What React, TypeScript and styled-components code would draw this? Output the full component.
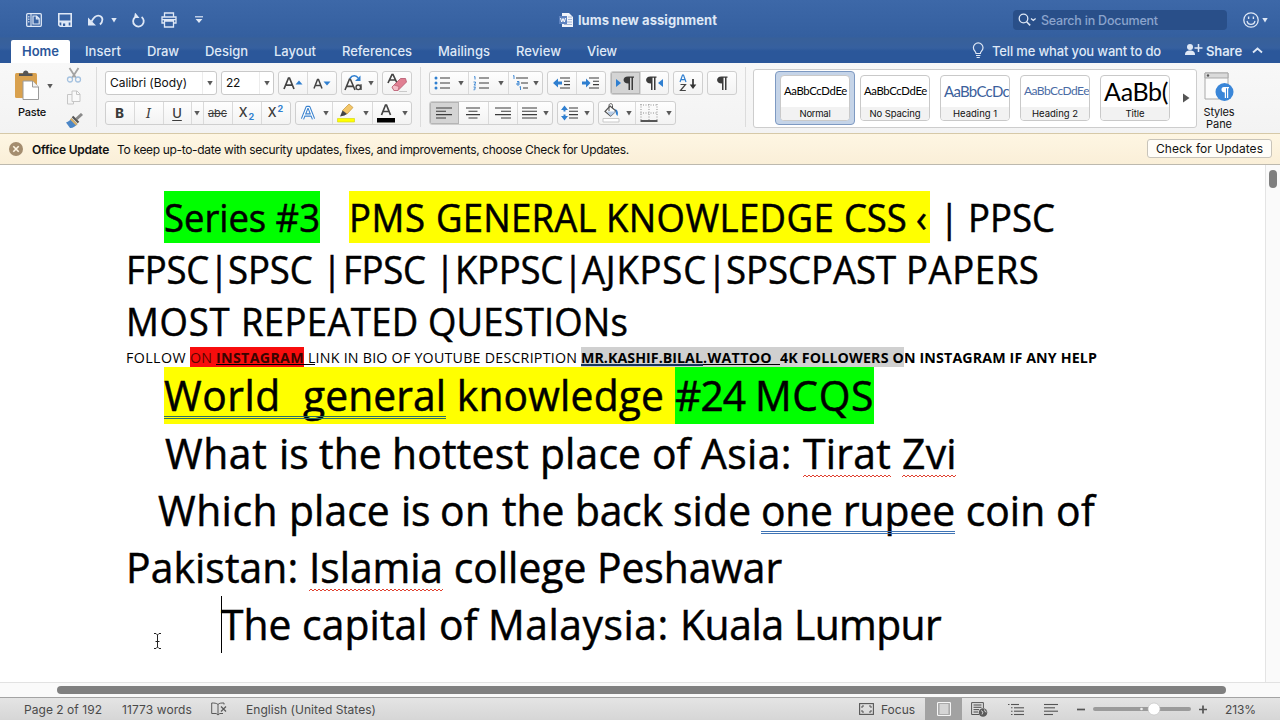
import React from 'react';
import styled, { createGlobalStyle, css } from 'styled-components';

const ui = '"Inter", "Liberation Sans", sans-serif';
const body = '"Open Sans", "Noto Sans", sans-serif';

const Global = createGlobalStyle`
  * { box-sizing: border-box; }
  body { margin: 0; overflow: hidden; background: #fff; }
  svg { display: block; flex: none; }
`;

const Window = styled.div`
  width: 1280px; height: 720px; display: flex; flex-direction: column;
  font-family: ${ui}; font-size: 12px; color: #111; overflow: hidden;
`;

const Label = styled.span<{ $w: number; $ls?: number; $size?: number; $weight?: number; $color?: string }>`
  display: block; flex: none; width: ${p => p.$w}px; white-space: pre;
  letter-spacing: ${p => p.$ls ?? 0}px;
  font-size: ${p => p.$size ?? 12}px; font-weight: ${p => p.$weight ?? 400};
  color: ${p => p.$color ?? 'inherit'};
`;
type TextProps = { w: number; ls?: number; size?: number; weight?: number; color?: string; children: React.ReactNode };
const T = ({ w, ls, size, weight, color, children }: TextProps) => (
  <Label $w={w} $ls={ls} $size={size} $weight={weight} $color={color}>{children}</Label>
);

const Gap = styled.div<{ $w: number }>`flex: none; width: ${p => p.$w}px;`;

/* title bar */
const Top = styled.header`
  height: 63px; flex: none; color: #dfe8f6;
  background: linear-gradient(#3d68a8 0, #345f9f 37px, #386099 38px, #36609f 48px, #2b579a 51px, #2b579a 100%);
`;
const TitleBar = styled.div`height: 40px; display: flex; align-items: center;`;
const SearchBox = styled.div`
  width: 214px; height: 20px; border-radius: 4px; background: #294f89; display: flex; align-items: center; padding-left: 5px;
`;
const TabRow = styled.nav`height: 23px; display: flex; align-items: center; padding-bottom: 2px;`;
const Tab = styled.div<{ $active?: boolean }>`
  height: 23px; display: flex; align-items: center; padding: 0 13px; flex: none;
  ${p => p.$active && css`background: #fff; color: #2b579a; padding: 0 11px; margin: 2px 2px 0 11px; padding-bottom: 1px; border-radius: 2px 2px 0 0;`}
`;

/* ribbon */
const Ribbon = styled.section`
  height: 71px; flex: none; display: flex; background: linear-gradient(#f8f8f8, #f3f3f3);
  border-bottom: 1px solid #d6c9a8;
`;
const Separator = styled.div`width: 1px; height: 60px; margin-top: 4px; background: #dcdcdc; flex: none;`;
const Rows = styled.div<{ $w: number }>`
  width: ${p => p.$w}px; padding: 8px 0 0 8px; display: flex; flex-direction: column; gap: 6px; flex: none;
`;
const Row = styled.div`display: flex; gap: 4px; height: 24px;`;
const Group = styled.div<{ $w: number }>`
  width: ${p => p.$w}px; height: 24px; flex: none; display: flex; border: 1px solid #cfcfcf; border-radius: 3px;
  background: linear-gradient(#fefefe, #f3f3f3); overflow: hidden;
`;
const Cell = styled.div<{ $w: number; $on?: boolean; $line?: boolean }>`
  width: ${p => p.$w}px; flex: none; display: flex; align-items: center; justify-content: center; padding-right: 1px;
  border-left: ${p => (p.$line ? '1px solid #dadada' : '0')};
  ${p => p.$on && css`background: #d4d4d4; box-shadow: inset 0 0 0 1px #b5b5b5;`}
`;
const Combo = styled.div<{ $w: number }>`
  width: ${p => p.$w}px; height: 24px; flex: none; display: flex; align-items: center; padding: 0 0 1px 4px;
  border: 1px solid #c9c9c9; border-radius: 3px; background: #fff;
`;
const ComboArrow = styled.div`
  margin-left: auto; width: 14px; height: 22px; border-left: 1px solid #ececec; display: flex; align-items: center; justify-content: center;
`;
const Glyph = styled.span<{ $size: number; $weight?: number; $italic?: boolean; $strike?: boolean; $under?: boolean; $serif?: boolean }>`
  font-size: ${p => p.$size}px; font-weight: ${p => p.$weight ?? 400}; color: #3b3b3b; line-height: 1;
  font-style: ${p => (p.$italic ? 'italic' : 'normal')};
  font-family: ${p => (p.$serif ? '"DejaVu Serif", serif' : ui)};
  text-decoration: ${p => (p.$strike ? 'line-through' : p.$under ? 'underline' : 'none')};
  text-underline-offset: 2px;
  sub, sup { font-size: 9px; font-weight: 700; color: #2f7fd0; line-height: 0; margin-left: 1px; }
  sub { vertical-align: -3px; }
`;
const Clip = styled.div`width: 96px; display: flex; padding: 6px 0 0 14px; flex: none;`;
const PasteCol = styled.div`width: 30px; display: flex; flex-direction: column; gap: 5px;`;
const PasteLabel = styled.div`padding-left: 4px; height: 14px;`;
const ArrowCol = styled.div`width: 16px; padding: 14px 0 0 3px;`;
const MiniCol = styled.div`display: flex; flex-direction: column; gap: 7px; margin: -2px 0 0 6px;`;

const Gallery = styled.div`
  width: 444px; height: 59px; margin: 6px 0 0 7px; border: 1px solid #cdcdcd; border-radius: 3px; background: #fff;
  display: flex; padding: 1px 0 0 21px; flex: none;
`;
const StyleSlot = styled.div<{ $on?: boolean }>`
  width: 80px; height: 54px; padding: 3px 4px; flex: none; border-radius: 4px; border: 1px solid transparent;
  ${p => p.$on && css`background: #c5d4e8; border-color: #7d99c2;`}
`;
const StyleCard = styled.div`
  width: 70px; height: 46px; border: 1px solid #c9c9c9; border-radius: 4px; background: #fff; overflow: hidden;
  display: flex; flex-direction: column;
`;
const Sample = styled.div`
  height: 31px; flex: none; display: flex; align-items: center; padding: 0 0 2px 3px; overflow: hidden;
  font-family: "Lato", sans-serif;
`;
const StyleName = styled.div`
  flex: 1; background: #f2f2f2; display: flex; align-items: center; justify-content: center; line-height: 12px;
`;
const GalleryArrow = styled.div`padding: 22px 0 0 8px;`;
const PaneButton = styled.div`
  margin: 9px 0 0 5px; width: 34px; display: flex; flex-direction: column; align-items: center; line-height: 12px;
  svg { margin-bottom: 4px; }
`;

/* update notice */
const Notice = styled.section`
  height: 31px; flex: none; display: flex; align-items: center; padding: 0 8px 0 9px;
  background: linear-gradient(#fef6e3, #faefd8); border-bottom: 1px solid #bdb9ae;
`;
const NoticeButton = styled.div`
  margin-left: auto; width: 125px; height: 19px; margin-bottom: 2px; border: 1px solid #c8c4ba; border-radius: 3px; background: #fffdf8;
  display: flex; align-items: center; justify-content: center;
`;

/* document */
const Work = styled.main`height: 518px; flex: none; display: flex; background: #fff; border-bottom: 1px solid #e2e2e2;`;
const Page = styled.article`width: 1265px; padding-top: 26px; font-family: ${body}; color: #000; position: relative;`;
const VBar = styled.div`width: 15px; border-left: 1px solid #e4e4e4; background: #fafafa; padding: 5px 0 0 3px;`;
const VThumb = styled.div`width: 8px; height: 18px; border-radius: 4px; background: #7f7f7f;`;
const HBar = styled.div`height: 14px; flex: none; background: #fafafa; padding: 3px 0 0 57px;`;
const HThumb = styled.div`width: 1169px; height: 8px; border-radius: 4px; background: #808080;`;

const RunText = styled.span<{ $ls?: number; $bold?: boolean; $color?: string }>`
  display: inline-block; white-space: pre; transform-origin: 0 0;
  letter-spacing: ${p => p.$ls ?? 0}px; font-weight: ${p => (p.$bold ? 700 : 400)}; color: ${p => p.$color ?? '#000'};
`;
const Line = styled.div<{ $x: number }>`
  padding-left: ${p => p.$x}px; display: flex;
`;
const HeadLine = styled(Line)`
  height: 52px; font-size: 38px; line-height: 52.4px;
  ${RunText} { transform: scaleX(0.96); -webkit-text-stroke: 0.5px; }
`;
const NoteLine = styled(Line)`
  height: 20px; font-size: 14.5px; line-height: 21.4px;
  ${RunText} { transform: scaleX(0.98); }
`;
const BigLine = styled(Line)<{ $after?: number }>`
  height: 57px; margin-bottom: ${p => p.$after ?? 0}px; font-size: 41.6px; line-height: 56px;
  ${RunText} { transform: scaleX(0.98); -webkit-text-stroke: 0.5px; }
`;
const RunBox = styled.span<{ $w: number; $bg?: string }>`
  position: relative; flex: none; display: block; width: ${p => p.$w}px; height: 100%; background: ${p => p.$bg ?? 'transparent'};
`;
const DoubleRule = styled.i<{ $color: string }>`
  position: absolute; left: 0; right: 0; top: 49px; height: 3px;
  border-top: 1px solid ${p => p.$color}; border-bottom: 1px solid ${p => p.$color};
`;
const Rule = styled.i<{ $w: number; $color: string; $h: number }>`
  position: absolute; z-index: 1; left: 0; top: 17px; width: ${p => p.$w}px; height: ${p => p.$h}px; background: ${p => p.$color};
`;
const WaveSvg = styled.svg`position: absolute; left: 0; top: 49px;`;
const Wave = ({ w }: { w: number }) => (
  <WaveSvg width={w} height="4">
    <path fill="none" stroke="#e0402f" strokeWidth="1"
      d={'M0 3' + Array.from({ length: Math.floor(w / 2) }, (_, i) => `L${i * 2 + 2} ${i % 2 ? 3 : 1}`).join('')} />
  </WaveSvg>
);
type RunProps = { w: number; ls?: number; bg?: string; bold?: boolean; color?: string; t: string; children?: React.ReactNode };
const Run = ({ w, ls, bg, bold, color, t, children }: RunProps) => (
  <RunBox $w={w} $bg={bg}><RunText $ls={ls} $bold={bold} $color={color}>{t}</RunText>{children}</RunBox>
);
const Caret = styled.i`position: absolute; left: 0; top: 0; width: 1px; height: 57px; background: #000;`;
const Pointer = styled.svg`position: absolute; left: 152px; top: 467px;`;

/* status bar */
const Status = styled.footer`
  height: 23px; flex: none; display: flex; align-items: center; border-top: 1px solid #a3a3a3;
  background: linear-gradient(#e4e4e4, #d6d6d6); color: #4a4a4a;
`;
const ViewOn = styled.div`width: 37px; height: 22px; background: #a2a2a2; display: flex; align-items: center; justify-content: center;`;

const Down = ({ c = '#5a5a5a', s = 6 }: { c?: string; s?: number }) => (
  <svg width={s} height={s} viewBox="0 0 6 6"><path d="M0.3 1h5.4L3 5.4z" fill={c} /></svg>
);
const Svg = ({ w = 16, h = 16, children }: { w?: number; h?: number; children: React.ReactNode }) => (
  <svg width={w} height={h} viewBox={`0 0 ${w} ${h}`} fill="none" strokeLinecap="butt">{children}</svg>
);
const lines = (pts: number[][], c = '#3b3b3b') => pts.map(([x1, x2, y], i) => <path key={i} d={`M${x1} ${y}H${x2}`} stroke={c} strokeWidth="1.1" />);

const tabs: [string, number, number][] = [
  ['Insert', 36, 0.05], ['Draw', 32, -0.13], ['Design', 43, -0.03], ['Layout', 42, 0.02], ['References', 70, -0.05],
  ['Mailings', 52, 0.01], ['Review', 45, 0.07], ['View', 30, -0.18],
];
const styleCards = [
  { name: 'Normal', nw: 31, nls: -0.26, text: 'AaBbCcDdEe', w: 63, ls: -0.34, size: 11.3, color: '#000' },
  { name: 'No Spacing', nw: 51, nls: -0.1, text: 'AaBbCcDdEe', w: 63, ls: -0.34, size: 11.3, color: '#000' },
  { name: 'Heading 1', nw: 44, nls: 0, text: 'AaBbCcDc', w: 65, ls: -0.72, size: 15, color: '#3c5f9c' },
  { name: 'Heading 2', nw: 46, nls: 0, text: 'AaBbCcDdEe', w: 65, ls: -0.55, size: 12, color: '#4a6ba5' },
  { name: 'Title', nw: 19, nls: -0.08, text: 'AaBb(', w: 64, ls: -0.3, size: 25, color: '#000' },
];

const GREEN = '#00ff00', YELLOW = '#ffff00', RED = '#f80d0d', GRAY = '#d0d0d0';
const TEAL = '#2a6f6a', BLUE = '#3f74b5';

export default function App() {
  const ic = '#dfe8f6';
  return (
    <Window>
      <Global />
      <Top>
        <TitleBar>
          <Gap $w={26} />
          <Svg w={16} h={14}><rect x=".7" y=".7" width="14.6" height="12.6" rx="1" stroke={ic} strokeWidth="1.3" /><path d="M2.8 3v1.4M2.8 5.500v1.4M2.8 8v1.4M5 1v12" stroke={ic} strokeWidth="1.1" /><path d="M7 3h3.600l2.600 2.600V11H7zM10.400 3v2.800h2.800" stroke={ic} strokeWidth="1.2" /></Svg>
          <Gap $w={16} />
          <Svg w={14} h={14}><path d="M.8.8h12.4v12.4H2.200L.8 12z" stroke={ic} strokeWidth="1.6" /><path d="M1 7.500h12v2H1z" fill={ic} /><path d="M3.300 8h7.400v5.500H3.300z" fill={ic} /><path d="M5 10.500h2.200V13H5z" fill="#35609f" /></Svg>
          <Gap $w={16} />
          <Svg w={16} h={14}><path d="M0 4.500v8h8z" fill={ic} /><path d="M3.500 8.500C6 4 9 1.800 12 3c3.400 1.500 3 5.500 0 8.500" stroke={ic} strokeWidth="1.8" /></Svg>
          <Gap $w={7} /><Down c={ic} />
          <Gap $w={14} />
          <Svg w={15} h={15}><path d="M4 4.200A5.300 5.300 0 1 0 10.600 4" stroke={ic} strokeWidth="1.8" /><path d="M7 0v5.500L12.500 1z" fill={ic} transform="rotate(-90 8 3) translate(-1 -2)" /></Svg>
          <Gap $w={15} />
          <Svg w={16} h={16}><path d="M3.500 5V1h9v4M3.500 11H1V5h14v6h-2.500M3.500 9h9v6h-9zM1 7.600h14" stroke={ic} strokeWidth="1.3" /></Svg>
          <Gap $w={18} />
          <Svg w={8} h={8}><path d="M0 .8h8" stroke={ic} strokeWidth="1.2" /><path d="M.6 3h6.800L4 7z" fill={ic} /></Svg>
          <Gap $w={356} />
          <Svg w={14} h={14}><path d="M3 0h7l4 4v10H3z" fill="#f1f4fa" /><path d="M9 4h4M9 6.500h4M5 9h8M5 11.500h8" stroke="#8fa6cb" strokeWidth=".8" /><path d="M0 3h8v8H0z" fill="#5d82bf" /><path d="M1.500 5l1.200 4L4 5.500 5.300 9l1.200-4" stroke="#fff" strokeWidth="1" /></Svg>
          <Gap $w={5} />
          <T w={139} size={13} weight={700} ls={0.05}>lums new assignment</T>
          <Gap $w={296} />
          <SearchBox>
            <Svg w={20} h={14}><circle cx="5.500" cy="5.500" r="4.300" stroke={ic} strokeWidth="1.3" /><path d="M8.600 8.800l3.600 3.600" stroke={ic} strokeWidth="1.5" /><path d="M13 5.500l2.300 2 2.300-2" stroke={ic} strokeWidth="1.3" /></Svg>
            <Gap $w={3} /><T w={116} size={12.5} ls={-0.22} weight={500} color="#8ba4cd">Search in Document</T>
          </SearchBox>
          <Gap $w={16} />
          <Svg w={16} h={16}><circle cx="8" cy="8" r="7.200" stroke={ic} strokeWidth="1.3" /><path d="M5.600 4.500v2.500M10.400 4.500v2.500" stroke={ic} strokeWidth="1.4" /><path d="M4 9c1 4.500 7 4.500 8 0" stroke={ic} strokeWidth="1.2" /></Svg>
          <Gap $w={3} /><Down c={ic} s={6} />
        </TitleBar>
        <TabRow>
          <Tab $active><T w={37} size={13} weight={600}>Home</T></Tab>
          {tabs.map(([name, w, ls]) => <Tab key={name}><T w={w} ls={ls} size={13} weight={500}>{name}</T></Tab>)}
          <Gap $w={342} />
          <Svg w={13} h={18}><path d="M4 11.500C4 9.500 1.400 8.700 1.400 5.700a4.800 4.800 0 0 1 9.600 0c0 3-2.600 3.800-2.600 5.800z" stroke={ic} strokeWidth="1.2" /><path d="M4 13.500h4.400M4.600 15.500h3.200" stroke={ic} strokeWidth="1.2" /></Svg>
          <Gap $w={7} /><T w={169} size={13} weight={500} ls={-0.16}>Tell me what you want to do</T>
          <Gap $w={24} />
          <Svg w={18} h={17}><circle cx="5" cy="5" r="3" fill={ic} /><path d="M0 13c0-3.500 2-4.500 5-4.500s5 1 5 4.500z" fill={ic} /><path d="M9.500 6h8M13.500 2v8" stroke={ic} strokeWidth="1.5" /></Svg>
          <Gap $w={3} /><T w={36} size={13} weight={600} ls={-0.09}>Share</T>
          <Gap $w={10} />
          <Svg w={11} h={10}><path d="M1 6.500l4.500-4 4.500 4" stroke={ic} strokeWidth="1.8" /></Svg>
        </TabRow>
      </Top>

      <Ribbon>
        <Clip>
          <PasteCol>
            <Svg w={26} h={31}><rect x="1" y="4" width="22" height="25" rx="1.500" fill="#d9a14e" /><path d="M5 7V4.500h4C9 .5 14.500.5 14.500 4.500h4V7z" fill="#555" /><path d="M9 12h9.500l6 6v12.500H9z" fill="#fff" stroke="#9a9a9a" /><path d="M18.500 12v6h6" stroke="#9a9a9a" fill="#f4f4f4" /></Svg>
            <PasteLabel><T w={28} size={11} weight={500} ls={-0.26}>Paste</T></PasteLabel>
          </PasteCol>
          <ArrowCol><Down /></ArrowCol>
          <MiniCol>
            <Svg w={16} h={16}><path d="M3.500 1l6.500 10M12.500 1L6 11" stroke="#a3a3a3" strokeWidth="1.8" /><circle cx="4" cy="12.500" r="2.500" stroke="#a5c2e0" strokeWidth="1.3" /><circle cx="12" cy="12.500" r="2.500" stroke="#a5c2e0" strokeWidth="1.3" /></Svg>
            <Svg w={16} h={16}><path d="M1.500 4.500h6v9.500h-6z" stroke="#c6c6c6" /><path d="M6 1h5l3 3v7.500H6z" fill="#f9f9f9" stroke="#c6c6c6" /><path d="M10.500 1v3.500H14" stroke="#c6c6c6" /></Svg>
            <Svg w={17} h={16}><path d="M16 1l-5.500 5" stroke="#8a8a8a" strokeWidth="3" /><path d="M6.500 3.500l6 6" stroke="#555" strokeWidth="2.2" /><path d="M5.500 5l6 6c-2 2-5 4.500-7.500 4L0 9.500C2.500 9 4.500 7 5.500 5z" fill="#4c86c6" /><path d="M5.500 5l6 6-1.500 1.500-6-6z" fill="#d9b16b" /></Svg>
          </MiniCol>
        </Clip>
        <Separator />
        <Rows $w={323}>
          <Row>
            <Combo $w={112}><T w={77} size={12} ls={-0.04}>Calibri (Body)</T><ComboArrow><Down /></ComboArrow></Combo>
            <Combo $w={53}><T w={14} size={12} ls={-0.32}>22</T><ComboArrow><Down /></ComboArrow></Combo>
            <Group $w={59}>
              <Cell $w={28}><Svg w={20} h={16}><path d="M1 14L5.500 3h1L11 14M2.700 10.200h6.600" stroke="#444" strokeWidth="1.7" /><path d="M12.500 9.500h7L16 5.500z" fill="#2f7fd0" /></Svg></Cell>
              <Cell $w={29} $line><Svg w={20} h={16}><path d="M2 13.500L5.500 4.500h1L10 13.500M3.300 10.500h5.400" stroke="#444" strokeWidth="1.5" /><path d="M11.500 6.500h7L15 10.500z" fill="#2f7fd0" /></Svg></Cell>
            </Group>
            <Group $w={37}>
              <Cell $w={24}><Svg w={20} h={18}><path d="M1 16L5.500 5h.8L11 16M2.800 12.400h6.200" stroke="#444" strokeWidth="1.6" /><circle cx="14.300" cy="13.300" r="2.300" stroke="#444" strokeWidth="1.4" /><path d="M17 10.300V16" stroke="#444" strokeWidth="1.4" /><path d="M6 4.500C8 1 12.500 1 14 4" stroke="#2f7fd0" strokeWidth="1.6" /><path d="M16.500 1.500V7h-5.500z" fill="#2f7fd0" /></Svg></Cell>
              <Cell $w={11}><Down /></Cell>
            </Group>
            <Group $w={30}><Cell $w={28}><Svg w={22} h={20}><path d="M2 10L6 1.500h1L11 10M3.500 7h6" stroke="#444" strokeWidth="1.7" /><path d="M13 18.500h8" stroke="#c9c9c9" /><path d="M6 14l8.500-8.500h5l1 3.500-8.500 8.500H8z" fill="#e07f92" stroke="#b4576c" strokeWidth=".8" /><path d="M6 14l2-2 5 1.500-1 4H8z" fill="#f5bcc7" stroke="#b4576c" strokeWidth=".6" /></Svg></Cell></Group>
          </Row>
          <Row>
            <Group $w={186}>
              <Cell $w={28}><Glyph $size={13} $weight={800}>B</Glyph></Cell>
              <Cell $w={29} $line><Glyph $size={13} $italic $serif>I</Glyph></Cell>
              <Cell $w={28} $line><Glyph $size={13} $under $weight={500}>U</Glyph></Cell>
              <Cell $w={12} $line><Down /></Cell>
              <Cell $w={29} $line><Glyph $size={11} $strike>abc</Glyph></Cell>
              <Cell $w={29} $line><Glyph $size={12.5} $weight={500}>X<sub>2</sub></Glyph></Cell>
              <Cell $w={29} $line><Glyph $size={12.5} $weight={500}>X<sup>2</sup></Glyph></Cell>
            </Group>
            <Group $w={117}>
              <Cell $w={24}><Svg w={16} h={16}><path d="M2.500 14L7 2.500h2L13.500 14M4.500 10h7" stroke="#3b83cf" strokeWidth="3.4" strokeLinejoin="round" /><path d="M2.500 14L7 2.500h2L13.500 14M4.500 10h7" stroke="#fff" strokeWidth="1.2" /></Svg></Cell>
              <Cell $w={12}><Down /></Cell>
              <Cell $w={28} $line><Svg w={20} h={20}><path d="M1.500 15.500h17v3.500h-17z" fill="#ffff00" stroke="#d5d520" strokeWidth=".7" /><path d="M13 1l4 3.500-6 6.500-4.500-3.500z" fill="#f3c669" stroke="#c4953a" strokeWidth=".7" /><path d="M6.500 7.500L11 11l-2.500 1.500L4 13.500z" fill="#444" /></Svg></Cell>
              <Cell $w={12}><Down /></Cell>
              <Cell $w={28} $line><Svg w={20} h={20}><path d="M5.500 12L9.500 2h1l4 10M7 8.500h6" stroke="#444" strokeWidth="1.7" /><path d="M1 15h18v4.500H1z" fill="#000" /></Svg></Cell>
              <Cell $w={11}><Down /></Cell>
            </Group>
          </Row>
        </Rows>
        <Separator />
        <Rows $w={324}>
          <Row>
            <Group $w={114}>
              <Cell $w={24}><Svg w={18} h={16}>{[3, 8, 13].map(y => <circle key={y} cx="3" cy={y} r="1.500" fill="#2f7fd0" />)}{lines([[7, 17, 3], [7, 17, 8], [7, 17, 13]])}</Svg></Cell>
              <Cell $w={14}><Down /></Cell>
              <Cell $w={26} $line><Svg w={18} h={16}><path d="M2 2l1-.5V4.500M1.500 7h2v1L2 10h2M1.500 12h2l-1 1.300c1.500 0 1 1.700-1 1.500" stroke="#2f7fd0" strokeWidth=".9" />{lines([[7, 17, 3], [7, 17, 8], [7, 17, 13]])}</Svg></Cell>
              <Cell $w={14}><Down /></Cell>
              <Cell $w={23} $line><Svg w={18} h={16}><path d="M2 1l1-.5V4M6 6.500h2V10H6V8h2M8.500 12l1-.5V15" stroke="#2f7fd0" strokeWidth=".9" />{lines([[5, 17, 3], [10, 17, 8], [12, 17, 13]])}</Svg></Cell>
              <Cell $w={11}><Down /></Cell>
            </Group>
            <Group $w={59}>
              <Cell $w={28}><Svg w={18} h={14}><path d="M0 7l5-4.500v3h4v3H5v3z" fill="#2f7fd0" />{lines([[7, 17, 2], [11, 17, 5.3], [11, 17, 8.6], [7, 17, 12]])}</Svg></Cell>
              <Cell $w={29} $line><Svg w={18} h={14}><path d="M8.500 7L4 2.500v3H0v3h4v3z" fill="#2f7fd0" />{lines([[7, 17, 2], [11, 17, 5.3], [11, 17, 8.6], [7, 17, 12]])}</Svg></Cell>
            </Group>
            <Group $w={59}>
              <Cell $w={29} $on><Svg w={18} h={16}><path d="M0 4l5 4-5 4z" fill="#2f7fd0" /><path d="M12 1.500h6v1.300h-1V15h-1.500V2.800H14V15h-1.500V8.500C6 8.500 6 1.500 12 1.500z" fill="#3b3b3b" /></Svg></Cell>
              <Cell $w={28} $line><Svg w={18} h={16}><path d="M18 4l-5 4 5 4z" fill="#2f7fd0" /><path d="M5.500 1.500h6v1.300h-1V15H9V2.800H7.500V15H6V8.500C-.5 8.500-.5 1.500 5.500 1.500z" fill="#3b3b3b" /></Svg></Cell>
            </Group>
            <Group $w={30}><Cell $w={28}><Svg w={18} h={18}><path d="M1 8L3.500 1h1L7 8M2 5.700h4" stroke="#2f7fd0" strokeWidth="1.2" /><path d="M1.500 10.500h5l-5 6h5.300" stroke="#444" strokeWidth="1.2" /><path d="M14 5v8" stroke="#333" strokeWidth="1.7" /><path d="M10.700 10.500h6.600L14 15z" fill="#333" /></Svg></Cell></Group>
            <Group $w={30}><Cell $w={28}><Svg w={12} h={16}><path d="M5.500 1.500h6v1.300h-1V15H9V2.800H7.500V15H6V8.500C-.5 8.500-.5 1.500 5.500 1.500z" fill="#3b3b3b" /></Svg></Cell></Group>
          </Row>
          <Row>
            <Group $w={124}>
              <Cell $w={29} $on><Svg w={16} h={12}>{lines([[0, 16, 1], [0, 10, 4.3], [0, 16, 7.6], [0, 10, 11]])}</Svg></Cell>
              <Cell $w={29}><Svg w={14} h={12}>{lines([[0, 14, 1], [2.5, 11.5, 4.3], [0, 14, 7.6], [2.5, 11.5, 11]])}</Svg></Cell>
              <Cell $w={29} $line><Svg w={16} h={12}>{lines([[0, 16, 1], [6, 16, 4.3], [0, 16, 7.6], [6, 16, 11]])}</Svg></Cell>
              <Cell $w={24} $line><Svg w={15} h={12}>{lines([[0, 15, 1], [0, 15, 4.3], [0, 15, 7.6], [0, 15, 11]])}</Svg></Cell>
              <Cell $w={11}><Down /></Cell>
            </Group>
            <Group $w={37}>
              <Cell $w={24}><Svg w={19} h={16}><path d="M1 5l3.500-4.500L8 5H5.500v1.500h-2V5zM1 11l3.500 4.500L8 11H5.500V9.500h-2V11z" fill="#2f7fd0" />{lines([[9, 18, 3], [9, 18, 6.3], [9, 18, 9.6], [9, 18, 13]])}</Svg></Cell>
              <Cell $w={11}><Down /></Cell>
            </Group>
            <Group $w={78}>
              <Cell $w={24}><Svg w={18} h={20}><path d="M1 15.500h16v3.500H1z" fill="#fff" stroke="#c9c9c9" /><path d="M8 3l6 5-5.500 5L3 8.500z" fill="#fff" stroke="#555" strokeWidth="1.2" /><path d="M5 8.500h9L8.500 13z" fill="#b9cde6" /><path d="M7 8V2.500C7 0 10.500 0 10.500 2.500V5" stroke="#555" strokeWidth="1" /><path d="M13 6c3 1 3.500 4 2.500 7-1.500-1-2-3-1.500-5z" fill="#2f7fd0" /></Svg></Cell>
              <Cell $w={12}><Down /></Cell>
              <Cell $w={28} $line><Svg w={18} h={18}><path d="M.5 1h17M.5 9h17M1 0v16M9 0v16M17 0v16" stroke="#8f8f8f" strokeDasharray="1 1.500" /><path d="M.5 17h17" stroke="#222" strokeWidth="1.3" /></Svg></Cell>
              <Cell $w={12}><Down /></Cell>
            </Group>
          </Row>
        </Rows>
        <Separator />
        <Gallery>
          {styleCards.map((s, i) => (
            <StyleSlot key={s.name} $on={i === 0}>
              <StyleCard>
                <Sample><T w={s.w} ls={s.ls} size={s.size} color={s.color}>{s.text}</T></Sample>
                <StyleName><T w={s.nw} ls={s.nls} size={9.5}>{s.name}</T></StyleName>
              </StyleCard>
            </StyleSlot>
          ))}
          <GalleryArrow><Svg w={7} h={10}><path d="M0 .5L6.500 5 0 9.500z" fill="#555" /></Svg></GalleryArrow>
        </Gallery>
        <PaneButton>
          <Svg w={30} h={30}><path d="M1 1h23v26H1z" fill="#fbfbfb" stroke="#a9a9a9" /><path d="M1 1h23v5H1z" fill="#dadada" stroke="#a9a9a9" /><circle cx="4" cy="3.500" r="1.200" fill="#555" /><circle cx="20.500" cy="20" r="9" fill="#3a86d8" /><path d="M20 15h5v1.200h-.8V26h-1.200V16.200H22V26h-1.200V20.500C16.500 20.500 16.500 15 20 15z" fill="#fff" /></Svg>
          <T w={31} size={11} ls={-0.17}>Styles</T><T w={26} size={11} ls={-0.03}>Pane</T>
        </PaneButton>
      </Ribbon>

      <Notice>
        <Svg w={14} h={14}><circle cx="7" cy="7" r="7" fill="#a48d6f" /><path d="M4.300 4.300l5.400 5.400M9.700 4.300L4.300 9.700" stroke="#fff6e4" strokeWidth="1.6" /></Svg>
        <Gap $w={9} /><T w={77} ls={-0.25} weight={600}>Office Update</T><Gap $w={8} />
        <T w={512} ls={-0.33}>To keep up-to-date with security updates, fixes, and improvements, choose Check for Updates.</T>
        <NoticeButton><T w={107} ls={0.04}>Check for Updates</T></NoticeButton>
      </Notice>

      <Work>
        <Page>
          <HeadLine $x={164}>
            <Run w={156} ls={-0.05} bg={GREEN} t="Series #3" /><Gap $w={29} />
            <Run w={86.5} ls={0.59} bg={YELLOW} t="PMS " /><Run w={170.5} ls={0.24} bg={YELLOW} t="GENERAL " />
            <Run w={238} ls={0.42} bg={YELLOW} t="KNOWLEDGE " /><Run w={72} ls={-0.12} bg={YELLOW} t="CSS " /><Run w={14} bg={YELLOW} t="‹" />
            <Run w={38} ls={-0.35} t=" | " /><Run w={87} ls={0.03} t="PPSC" />
          </HeadLine>
          <HeadLine $x={126}>
            <Run w={83} ls={-0.2} t="FPSC" /><Run w={19} t="|" /><Run w={94} ls={-0.09} t="SPSC " /><Run w={21} t="|" />
            <Run w={92} ls={-0.26} t="FPSC " /><Run w={20} t="|" /><Run w={108} ls={-0.25} t="KPPSC" /><Run w={19} t="|" />
            <Run w={125} ls={0.84} t="AJKPSC" /><Run w={19} t="|" /><Run w={179.5} t="SPSCPAST " /><Run w={133.5} ls={0.65} t="PAPERS" />
          </HeadLine>
          <HeadLine $x={126}>
            <Run w={114.5} ls={0.78} t="MOST " /><Run w={187.5} ls={0.36} t="REPEATED " /><Run w={200} ls={0.14} t="QUESTIONs" />
          </HeadLine>
          <NoteLine $x={126}>
            <Run w={64} ls={0.43} t="FOLLOW " /><Run w={26} ls={0.19} bg={RED} color="#5c0500" t="ON " />
            <Run w={88} ls={0.34} bg={RED} bold color="#3a0400" t="INSTAGRAM"><Rule $w={99} $color="#000" $h={1} /></Run>
            <Run w={277} ls={0.25} t=" LINK IN BIO OF YOUTUBE DESCRIPTION " />
            <Run w={122} ls={0.04} bg={GRAY} bold t="MR.KASHIF.BILAL"><Rule $w={122} $color="#17375f" $h={2} /></Run>
            <Run w={77} ls={0.34} bg={GRAY} bold t=".WATTOO  "><Rule $w={77} $color="#000" $h={1} /></Run>
            <Run w={124} ls={0.17} bg={GRAY} bold t="4K FOLLOWERS O" /><Run w={193} ls={0.14} bold t="N INSTAGRAM IF ANY HELP" />
          </NoteLine>
          <BigLine $x={164} $after={1}>
            <Run w={139} ls={0.55} bg={YELLOW} t="World  "><DoubleRule $color={TEAL} /></Run>
            <Run w={143} ls={0.07} bg={YELLOW} t="general"><DoubleRule $color={TEAL} /></Run>
            <Run w={229} ls={0.2} bg={YELLOW} t=" knowledge " /><Run w={80} ls={-0.91} bg={GREEN} t="#24 " /><Run w={119} ls={0.66} bg={GREEN} t="MCQS" />
          </BigLine>
          <BigLine $x={165}>
            <Run w={113.5} ls={0.63} t="What " /><Run w={40} ls={-0.1} t="is " /><Run w={73.5} ls={0.12} t="the " /><Run w={148} ls={0.25} t="hottest " />
            <Run w={112} ls={0.18} t="place " /><Run w={49} ls={0.05} t="of " /><Run w={102} ls={0.44} t="Asia: " />
            <Run w={88} ls={0.29} t="Tirat"><Wave w={88} /></Run><Gap $w={11} /><Run w={55} ls={0.34} t="Zvi"><Wave w={55} /></Run>
          </BigLine>
          <BigLine $x={158}>
            <Run w={131} ls={0.5} t="Which " /><Run w={111.5} ls={0.09} t="place " /><Run w={39.5} ls={-0.18} t="is " /><Run w={61.5} ls={0.47} t="on " />
            <Run w={73} t="the " /><Run w={98} ls={-0.24} t="back " /><Run w={88.5} ls={0.17} t="side " />
            <Run w={82} ls={-0.26} t="one "><DoubleRule $color={BLUE} /></Run><Run w={112} ls={-0.09} t="rupee"><DoubleRule $color={BLUE} /></Run>
            <Run w={101} ls={0.08} t=" coin " /><Run w={39} ls={0.38} t="of" />
          </BigLine>
          <BigLine $x={126}>
            <Run w={183} ls={0.12} t="Pakistan: " /><Run w={134} ls={-0.07} t="Islamia"><Wave w={134} /></Run>
            <Run w={154} ls={0.04} t=" college " /><Run w={185} ls={-0.04} t="Peshawar" />
          </BigLine>
          <BigLine $x={221}>
            <Run w={81} ls={0.01} t="The "><Caret /></Run><Run w={136.5} ls={0.13} t="capital " /><Run w={49.5} ls={0.23} t="of " />
            <Run w={192} ls={0.58} t="Malaysia: " /><Run w={114} ls={-0.36} t="Kuala " /><Run w={147} ls={-0.62} t="Lumpur" />
          </BigLine>
          <Pointer width="11" height="18" viewBox="0 0 11 18"><path d="M2 1.500h2l1.500 1.500L7 1.500h2M5.500 3v12M3.500 9.500h4M2 16.500h2L5.500 15 7 16.500h2" fill="none" stroke="#222" /></Pointer>
        </Page>
        <VBar><VThumb /></VBar>
      </Work>
      <HBar><HThumb /></HBar>

      <Status>
        <Gap $w={24} /><T w={78} ls={0.04}>Page 2 of 192</T><Gap $w={20} /><T w={70} ls={0.09}>11773 words</T><Gap $w={19} />
        <Svg w={16} h={14}><path d="M7 2.500V13M7 2.500C5.500 1 3 1 .7 1v10.500h4.500L7 13l1.800-1.500H12M7 2.500C8.500 1 10 1 13 1v1.500" stroke="#5a5a5a" /><path d="M10 4.500l5 5M15 4.500l-5 5" stroke="#5a5a5a" strokeWidth="1.2" /></Svg>
        <Gap $w={19} /><T w={130} ls={0.04}>English (United States)</T><Gap $w={483} />
        <Svg w={15} h={12}><rect x=".6" y=".6" width="13.8" height="10.8" stroke="#555" strokeWidth="1.1" /><path d="M3 5V3h2M10 3h2v2M12 7v2h-2M5 9H3V7" stroke="#555" /></Svg>
        <Gap $w={7} /><T w={34}>Focus</T><Gap $w={10} />
        <ViewOn><Svg w={14} h={14}><path d="M.6.6h12.8v12.8H.6z" stroke="#fff" />{lines([[2.5, 11.5, 3], [2.5, 11.5, 5], [2.5, 11.5, 7], [2.5, 11.5, 9], [2.5, 11.5, 11]], '#fff')}</Svg></ViewOn>
        <Gap $w={9} />
        <Svg w={17} h={15}><path d="M8 12.500H.6V.6h11.800V6" stroke="#555" />{lines([[2.5, 10.5, 3], [2.5, 10.5, 5.3], [2.5, 8, 7.6], [2.5, 7, 10]], '#555')}<circle cx="12" cy="10.500" r="4.300" fill="#5a5a5a" /><path d="M10 8.500l2 1.500-1 2.500M13.500 7.500l.5 2 1.500.5" stroke="#ddd" strokeWidth=".9" /></Svg>
        <Gap $w={20} />
        <Svg w={16} h={13}>{lines([[3, 11, 1.5], [6, 16, 4.8], [6, 16, 8.2], [6, 16, 11.5], [0, 1.5, 1.5], [3, 4.5, 4.8], [3, 4.5, 8.2], [3, 4.5, 11.5]], '#555')}</Svg>
        <Gap $w={19} />
        <Svg w={16} h={13}>{lines([[1, 15, 1.5], [1, 12, 4.8], [1, 15, 8.2], [1, 10, 11.5]], '#555')}</Svg>
        <Gap $w={18} />
        <Svg w={9} h={9}><path d="M0 4.500h8" stroke="#555" strokeWidth="1.7" /></Svg>
        <Gap $w={7} />
        <Svg w={98} h={14}><rect y="5" width="98" height="4" rx="2" fill="#9b9b9b" /><circle cx="48.500" cy="7" r="1.300" fill="#eee" /><circle cx="61" cy="7" r="6" fill="#fff" stroke="#bdbdbd" strokeWidth=".6" /></Svg>
        <Gap $w={8} />
        <Svg w={9} h={9}><path d="M0 4.500h8M4 .5v8" stroke="#555" strokeWidth="1.7" /></Svg>
        <Gap $w={17} /><T w={31} ls={-0.1}>213%</T>
      </Status>
    </Window>
  );
}
